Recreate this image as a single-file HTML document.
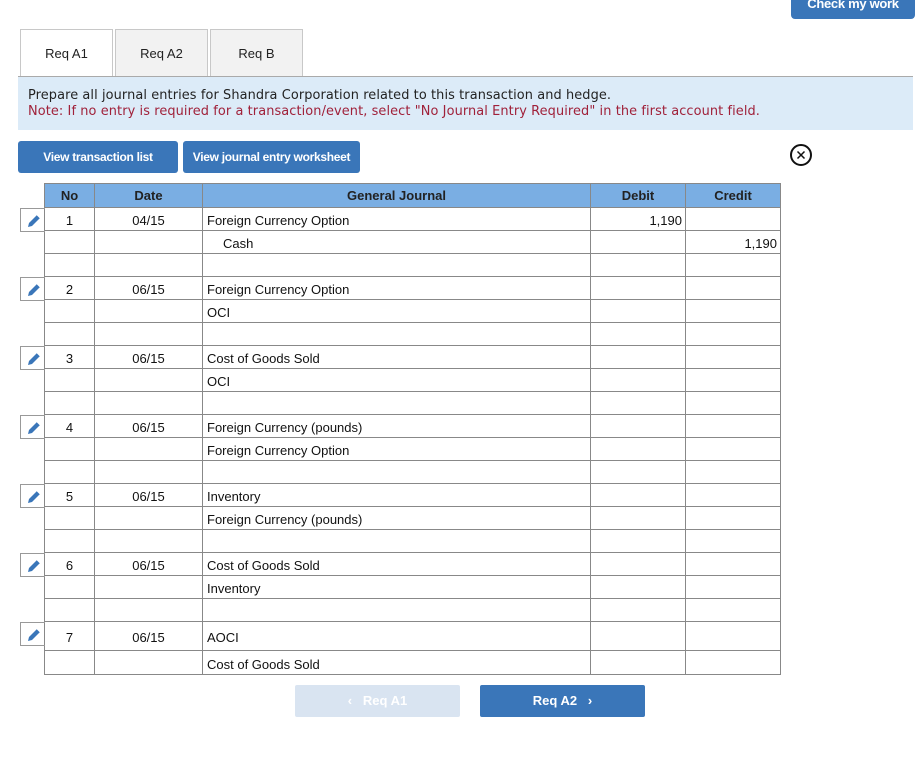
<!DOCTYPE html>
<html><head><style>
body{margin:0;width:915px;height:784px;background:#fff;font-family:"Liberation Sans",Arial,sans-serif;position:relative;overflow:hidden}
.abs{position:absolute}
.tab{position:absolute;top:29px;height:47px;border:1px solid #c8c8c8;border-bottom:none;background:#f2f2f2;font-size:13px;text-align:center;line-height:48px;color:#222;box-sizing:border-box}
.btn{position:absolute;background:#3a76b9;color:#fff;font-weight:bold;font-size:12px;text-align:center;border-radius:3px;letter-spacing:-0.3px}
.cell{position:absolute;border-right:1px solid #888;border-bottom:1px solid #888;box-sizing:border-box;font-size:13px;color:#111;white-space:nowrap}
.pen{position:absolute;left:20px;width:25px;height:24px;border:1px solid #999;border-right:none;box-sizing:border-box}
</style></head><body>
<div class="btn" style="left:791px;top:-8px;width:124px;height:27px;line-height:24px;font-size:13px;border-radius:4px">Check my work</div>
<div class="tab" style="left:20px;width:93px;background:#fff;height:48px">Req A1</div>
<div class="tab" style="left:115px;width:93px">Req A2</div>
<div class="tab" style="left:210px;width:93px">Req B</div>
<div class="abs" style="left:18px;top:76px;width:895px;height:53px;background:#dcebf8;border-top:1px solid #aaa;font-family:'DejaVu Sans',sans-serif;font-size:12.9px;letter-spacing:0.1px">
<div style="position:absolute;left:10px;top:11px;color:#222">Prepare all journal entries for Shandra Corporation related to this transaction and hedge.</div>
<div style="position:absolute;left:10px;top:27px;color:#a0213a">Note: If no entry is required for a transaction/event, select "No Journal Entry Required" in the first account field.</div>
</div>
<div class="btn" style="left:18px;top:141px;width:160px;height:32px;line-height:32px">View transaction list</div>
<div class="btn" style="left:183px;top:141px;width:177px;height:32px;line-height:32px">View journal entry worksheet</div>
<svg class="abs" style="left:789px;top:143px" width="24" height="24" viewBox="0 0 24 24"><circle cx="12" cy="12" r="10" fill="none" stroke="#111" stroke-width="2"/><path d="M8.5 8.5L15.5 15.5M15.5 8.5L8.5 15.5" stroke="#111" stroke-width="1.5"/></svg>
<div id="tbl"></div>
<div class="abs" style="left:295px;top:685px;width:165px;height:32px;background:#d9e4f1;color:#fff;font-weight:bold;font-size:13px;text-align:center;line-height:32px;border-radius:2px">&lsaquo;&nbsp;&nbsp; Req A1</div>
<div class="abs" style="left:480px;top:685px;width:165px;height:32px;background:#3a76b9;color:#fff;font-weight:bold;font-size:13px;text-align:center;line-height:32px;border-radius:2px">Req A2 &nbsp;&nbsp;&rsaquo;</div>
<script>
var cols=[[44,51],[95,108],[203,388],[591,95],[686,95]];
var h='';
function row(y,hh,vals,al){cols.forEach(function(c,i){var st='left:'+c[0]+'px;top:'+y+'px;width:'+c[1]+'px;height:'+hh+'px;line-height:'+(hh-1)+'px;padding-top:2px;';if(i==0)st+='border-left:1px solid #888;';var ta=(i<2)?'center':(i>2?'right':'left');var pad=i==2?'padding-left:'+(al?20:4)+'px;':(i>2?'padding-right:3px;':'');h+='<div class="cell" style="'+st+'text-align:'+ta+';'+pad+'">'+(vals[i]||'')+'</div>';});}
cols.forEach(function(c,i){h+='<div class="cell" style="left:'+c[0]+'px;top:183px;width:'+c[1]+'px;height:25px;background:#7aaee3;font-weight:bold;text-align:center;line-height:24px;color:#222;border-top:1px solid #888;'+(i==0?'border-left:1px solid #888;':'')+'">'+['No','Date','General Journal','Debit','Credit'][i]+'</div>';});
var E=[['1','04/15','Foreign Currency Option','Cash','1,190','1,190'],['2','06/15','Foreign Currency Option','OCI'],['3','06/15','Cost of Goods Sold','OCI'],['4','06/15','Foreign Currency (pounds)','Foreign Currency Option'],['5','06/15','Inventory','Foreign Currency (pounds)'],['6','06/15','Cost of Goods Sold','Inventory']];
var pen='<svg width="16" height="16" viewBox="0 0 16 16" style="position:absolute;left:5px;top:4px"><path d="M2 14l1-4 8-8 3 3-8 8z" fill="#3a76b9"/><path d="M11 2l3 3" stroke="#fff" stroke-width="0.8"/></svg>';
E.forEach(function(e,k){var y=208+k*69;row(y,23,[e[0],e[1],e[2],e[4]||'','']);row(y+23,23,['','',e[3],'',e[5]||''],k==0);row(y+46,23,[]);h+='<div class="pen" style="top:'+y+'px">'+pen+'</div>';});
row(622,29,['7','06/15','AOCI']);row(651,24,['','','Cost of Goods Sold']);
h+='<div class="pen" style="top:622px">'+pen+'</div>';
document.getElementById('tbl').innerHTML=h;
</script>
</body></html>
